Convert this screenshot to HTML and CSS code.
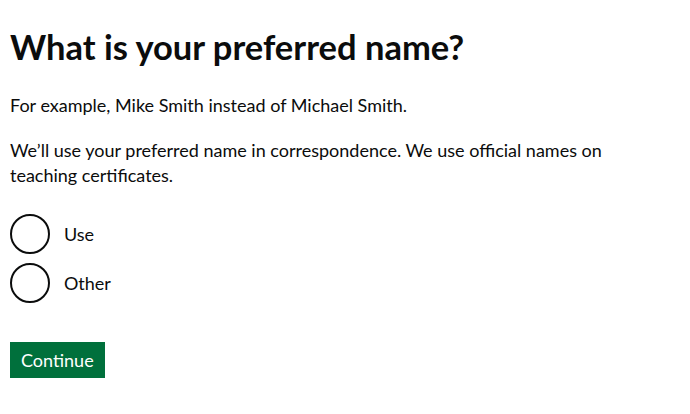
FILE: index.html
```html
<!DOCTYPE html>
<html lang="en">
<head>
<meta charset="utf-8">
<title>What is your preferred name?</title>
<link rel="stylesheet" href="styles.css">
</head>
<body>
<main class="page">
  <form class="form">
    <fieldset class="fieldset">
      <legend class="legend"><h1 class="heading">What is your preferred name?</h1></legend>
      <p class="body">For example, Mike Smith instead of Michael Smith.</p>
      <p class="body">We’ll use your preferred name in correspondence. We use official names on teaching certificates.</p>
      <div class="radios">
        <label class="radio"><input type="radio" name="preferred" class="radio-input"><span class="radio-mark"></span><span class="radio-label">Use</span></label>
        <label class="radio"><input type="radio" name="preferred" class="radio-input"><span class="radio-mark"></span><span class="radio-label">Other</span></label>
      </div>
    </fieldset>
    <button type="submit" class="button">Continue</button>
  </form>
</main>
</body>
</html>
```
FILE: styles.css
```css
* { box-sizing: border-box; }
html, body { margin: 0; padding: 0; background: #fff; }
body {
  font-family: Lato, "Liberation Sans", sans-serif;
  color: #0b0c0c;
}
.page { padding: 22px 10px 0 10px; }
.form { margin: 0; }
.fieldset { border: 0; margin: 0; padding: 0; min-width: 0; }
.legend { padding: 0; margin: 0; }
.heading {
  font-size: 34.5px;
  line-height: 50px;
  font-weight: 700;
  margin: 0 0 21px 0;
}
.body {
  font-size: 18px;
  line-height: 25px;
  margin: 0 0 20px 0;
  max-width: 630px;
}
.radios { display: flex; flex-direction: column; gap: 9px; margin-top: 26px; }
.radio { display: flex; align-items: center; gap: 14px; cursor: pointer; }
.radio-input { position: absolute; opacity: 0; width: 0; height: 0; margin: 0; }
.radio-mark {
  width: 40px; height: 40px; border: 2px solid #0b0c0c; border-radius: 50%;
  flex: none;
}
.radio-label { font-size: 18px; line-height: 25px; }
.button {
  margin-top: 39px;
  font-family: inherit;
  font-size: 18px;
  line-height: 25px;
  color: #fff;
  background: #00703c;
  border: 0;
  border-radius: 0;
  box-shadow: 0 2px 0 #002d18;
  padding: 6px 11px 5px 11px;
  cursor: pointer;
}
```
